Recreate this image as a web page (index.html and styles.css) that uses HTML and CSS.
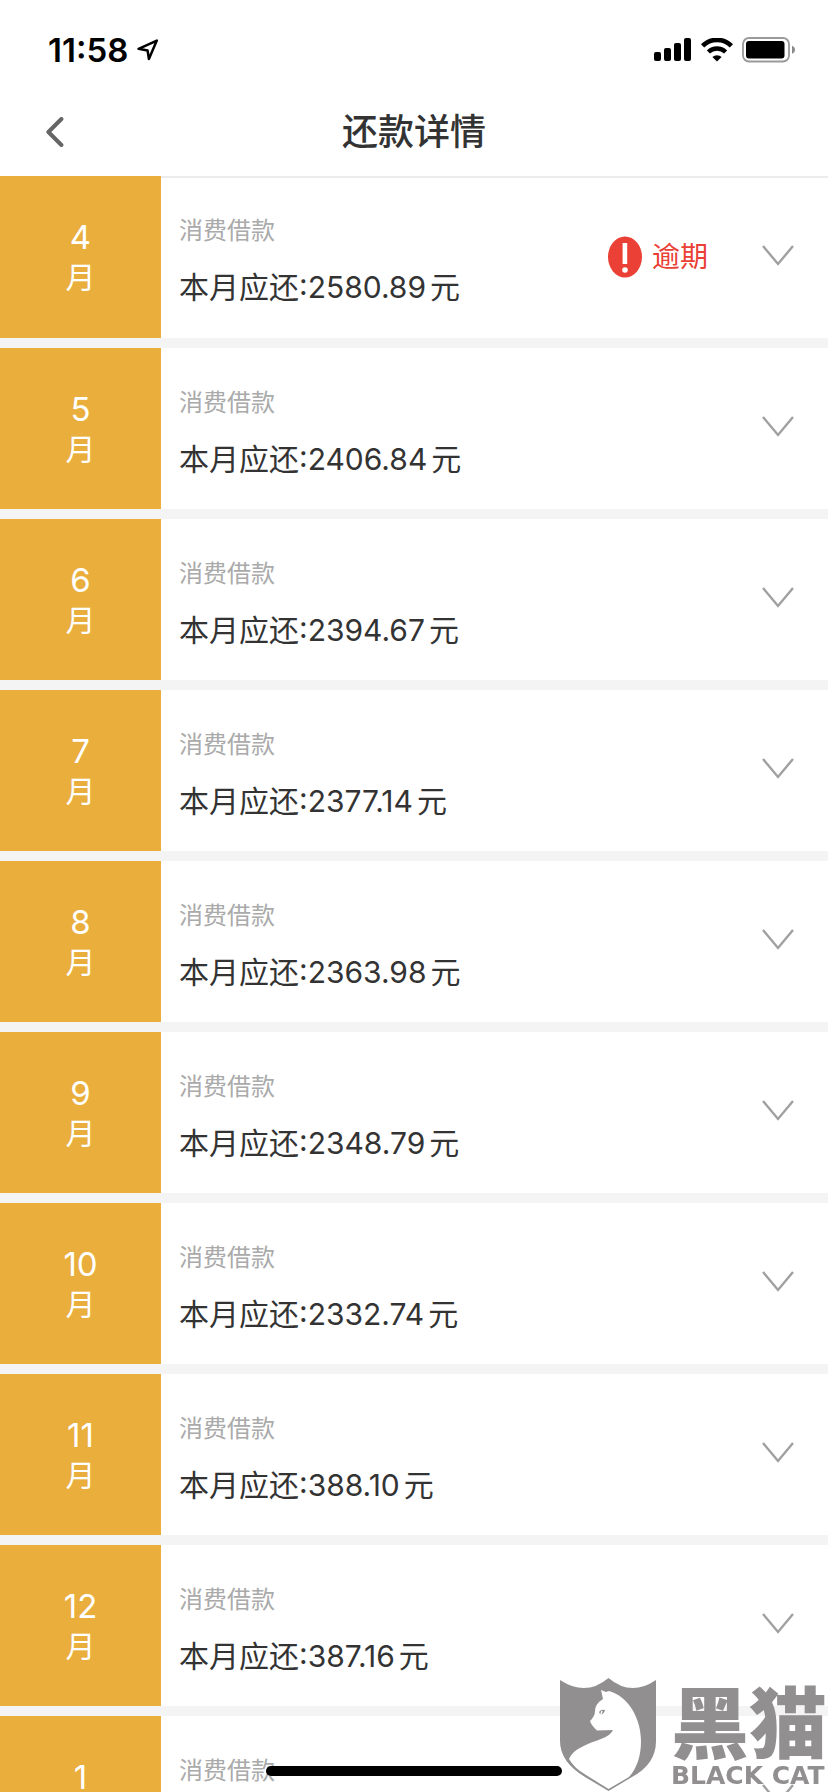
FILE: index.html
```
<!DOCTYPE html>
<html lang="zh-CN">

<head>
    <meta charset="UTF-8">
    <meta name="viewport" content="width=device-width, initial-scale=1.0">
    <title>还款详情</title>
    <link rel="stylesheet" href="styles.css">
</head>

<body>

    <svg class="symbols" aria-hidden="true">
        <symbol id="chevron" viewBox="0 0 32 21">
            <path d="M1 1 L16 19 L31 1" fill="none" stroke="currentColor" stroke-width="2.4" />
        </symbol>
    </svg>

    <header>
        <div class="status-bar">
            <div class="status-left">
                <span class="time">11:58</span>
                <svg width="22" height="22" viewBox="0 0 22 22">
                    <path d="M1.6 9.8 L19.8 1.6 L11.9 20 L10.6 11.6 Z" fill="none" stroke="#000" stroke-width="2.5" stroke-linejoin="round" />
                </svg>
            </div>
            <div class="status-right">
                <svg width="38" height="24" viewBox="0 0 38 24">
                    <rect x="0" y="14" width="7" height="9" rx="2" />
                    <rect x="10" y="10" width="7" height="13" rx="2" />
                    <rect x="20" y="5" width="7" height="18" rx="2" />
                    <rect x="30" y="0" width="7" height="23" rx="2" />
                </svg>
                <svg width="32" height="24" viewBox="0 0 32 24">
                    <path d="M1.6 7.8 A20.5 20.5 0 0 1 30.4 7.8" fill="none" stroke="#000" stroke-width="4.6" />
                    <path d="M7.4 14 A12.4 12.4 0 0 1 24.6 14" fill="none" stroke="#000" stroke-width="4.4" />
                    <path d="M11.4 19 A6.6 6.6 0 0 1 20.6 19 L16 23.4 Z" />
                </svg>
                <svg width="54" height="26" viewBox="0 0 54 26">
                    <rect x="1" y="1" width="46" height="23.5" rx="6" fill="none" stroke="#9a9a9a" stroke-width="1.8" />
                    <rect x="4" y="4" width="38.5" height="17.5" rx="3" />
                    <path d="M50 8.8 Q53 10 53 12.8 Q53 15.6 50 16.8 Z" fill="#8a8a8a" />
                </svg>
            </div>
        </div>
        <nav class="nav-bar">
            <button class="back" aria-label="返回">
                <svg width="18" height="30" viewBox="0 0 18 30">
                    <path d="M15.4 2 L2.4 15 L15.4 28" fill="none" stroke="#666" stroke-width="4" stroke-linecap="round" stroke-linejoin="round" />
                </svg>
            </button>
            <h1>还款详情</h1>
        </nav>
    </header>

    <main class="list">
        <section class="item">
            <div class="month"><span>4</span><span>月</span></div>
            <div class="info">
                <p class="type">消费借款</p>
                <p class="amount">本月应还:2580.89<span class="unit">元</span></p>
            </div>
            <div class="overdue">
                <svg width="34" height="42" viewBox="0 0 34 42">
                    <ellipse cx="17" cy="21" rx="17" ry="20.5" fill="#ea4035" />
                    <rect x="14.6" y="7" width="4.6" height="21" fill="#fff" />
                    <circle cx="17" cy="34" r="2.8" fill="#fff" />
                </svg>
                <span>逾期</span>
            </div>
            <button class="toggle" aria-label="展开4月"><svg><use href="#chevron" /></svg></button>
        </section>
        <section class="item">
            <div class="month"><span>5</span><span>月</span></div>
            <div class="info">
                <p class="type">消费借款</p>
                <p class="amount">本月应还:2406.84<span class="unit">元</span></p>
            </div>
            <button class="toggle" aria-label="展开5月"><svg><use href="#chevron" /></svg></button>
        </section>
        <section class="item">
            <div class="month"><span>6</span><span>月</span></div>
            <div class="info">
                <p class="type">消费借款</p>
                <p class="amount">本月应还:2394.67<span class="unit">元</span></p>
            </div>
            <button class="toggle" aria-label="展开6月"><svg><use href="#chevron" /></svg></button>
        </section>
        <section class="item">
            <div class="month"><span>7</span><span>月</span></div>
            <div class="info">
                <p class="type">消费借款</p>
                <p class="amount">本月应还:2377.14<span class="unit">元</span></p>
            </div>
            <button class="toggle" aria-label="展开7月"><svg><use href="#chevron" /></svg></button>
        </section>
        <section class="item">
            <div class="month"><span>8</span><span>月</span></div>
            <div class="info">
                <p class="type">消费借款</p>
                <p class="amount">本月应还:2363.98<span class="unit">元</span></p>
            </div>
            <button class="toggle" aria-label="展开8月"><svg><use href="#chevron" /></svg></button>
        </section>
        <section class="item">
            <div class="month"><span>9</span><span>月</span></div>
            <div class="info">
                <p class="type">消费借款</p>
                <p class="amount">本月应还:2348.79<span class="unit">元</span></p>
            </div>
            <button class="toggle" aria-label="展开9月"><svg><use href="#chevron" /></svg></button>
        </section>
        <section class="item">
            <div class="month"><span>10</span><span>月</span></div>
            <div class="info">
                <p class="type">消费借款</p>
                <p class="amount">本月应还:2332.74<span class="unit">元</span></p>
            </div>
            <button class="toggle" aria-label="展开10月"><svg><use href="#chevron" /></svg></button>
        </section>
        <section class="item">
            <div class="month"><span>11</span><span>月</span></div>
            <div class="info">
                <p class="type">消费借款</p>
                <p class="amount">本月应还:388.10<span class="unit">元</span></p>
            </div>
            <button class="toggle" aria-label="展开11月"><svg><use href="#chevron" /></svg></button>
        </section>
        <section class="item">
            <div class="month"><span>12</span><span>月</span></div>
            <div class="info">
                <p class="type">消费借款</p>
                <p class="amount">本月应还:387.16<span class="unit">元</span></p>
            </div>
            <button class="toggle" aria-label="展开12月"><svg><use href="#chevron" /></svg></button>
        </section>
        <section class="item">
            <div class="month"><span>1</span><span>月</span></div>
            <div class="info">
                <p class="type">消费借款</p>
            </div>
            <button class="toggle" aria-label="展开1月"><svg><use href="#chevron" /></svg></button>
        </section>
    </main>

    <div class="home-indicator"></div>

    <div class="watermark">
        <svg width="98" height="115" viewBox="0 0 98 115">
            <path d="M1 3 Q27 20 49.500 1 Q72 20 97 3 V64 Q97 87 73 100 L49.500 114 L26 100 Q1 85 1 64 Z" fill="#918f90" />
            <path d="M42 13 L47 15 L50 14 C69 19 82 41 82 64 C82 79 78 91 70 100 L49.500 112 L27 98 Q15 91 10 82 C14 72 28 67 42 62 Q51 59 54 53 L38 53.500 Q32 48 31 44 Q36 39 36 34 Q36 27 44 22 Z" fill="#fff" />
            <path d="M40 35 Q42 32 46 33 Q45 38 41 37 Z" fill="#918f90" />
            <path d="M43 34 L42 37" stroke="#fff" stroke-width="1.500" />
        </svg>
        <div class="brand">
            <span class="brand-cn">黑猫</span>
            <span class="brand-en">BLACK CAT</span>
        </div>
    </div>

</body>

</html>
```
FILE: styles.css
```
/* Reset Styles */
* {
    box-sizing: border-box;
    margin: 0;
    padding: 0;
}

/* Body Styles */
body {
    height: 100vh;
    overflow: hidden;
    background-color: #fff;
    color: #333;
    font-family: Inter, "Noto Sans CJK SC", sans-serif;
}

button {
    border: none;
    background: none;
    cursor: pointer;
}

svg {
    display: block;
}

.symbols {
    display: none;
}

/* Status Bar */
.status-bar {
    display: flex;
    justify-content: space-between;
    align-items: center;
    height: 88px;
    padding: 12px 32px 0 48px;
}

.status-left,
.status-right {
    display: flex;
    align-items: center;
    gap: 9px;
}

.time {
    color: #000;
    font-size: 33px;
    font-weight: 600;
}

/* Nav Bar */
.nav-bar {
    display: grid;
    grid-template-columns: 80px 1fr 80px;
    align-items: center;
    height: 88px;
}

.back {
    padding: 8px 16px 8px 46px;
}

h1 {
    font-size: 36px;
    font-weight: 500;
    line-height: 48px;
    text-align: center;
}

/* Repayment List */
.list {
    display: flex;
    flex-direction: column;
    gap: 10px;
    background-color: #f4f4f4;
}

.item {
    display: flex;
    flex-shrink: 0;
    align-items: center;
    height: 161px;
    padding-right: 34px;
    background-color: #fff;
}

.item:first-child {
    height: 162px;
    box-shadow: inset 0 2px #ececec;
}

.month {
    display: flex;
    flex-direction: column;
    justify-content: center;
    align-items: center;
    align-self: stretch;
    width: 161px;
    background-color: #e9ae3c;
    color: #fff;
    font-size: 33px;
    font-weight: 400;
    line-height: 40px;
}

.month span:last-child {
    font-size: 30px;
}

.info {
    display: flex;
    flex: 1;
    flex-direction: column;
    gap: 16px;
    height: 96px;
    padding-top: 2px;
    padding-left: 18px;
    line-height: 40px;
}

.type {
    color: #aaa;
    font-size: 24px;
}

.amount {
    font-size: 30px;
}

.unit {
    margin-left: 4px;
}

.overdue {
    display: flex;
    align-items: center;
    gap: 10px;
    margin-right: 54px;
    color: #ea4035;
    font-size: 28px;
    line-height: 40px;
}

.toggle {
    padding-bottom: 4px;
    color: #a0a0a0;
}

.toggle svg {
    width: 32px;
    height: 21px;
}

/* Home Indicator */
.home-indicator {
    position: fixed;
    bottom: 16px;
    left: 50%;
    width: 296px;
    height: 10px;
    margin-left: -148px;
    border-radius: 5px;
    background-color: #000;
}

/* Watermark */
.watermark {
    position: fixed;
    right: 0;
    bottom: 0;
    display: flex;
    gap: 14px;
    color: #918f90;
}

.brand {
    display: flex;
    flex-direction: column;
    width: 157px;
    white-space: nowrap;
}

.brand-cn {
    font-family: "Noto Sans CJK SC", sans-serif;
    font-size: 78px;
    font-weight: 900;
    line-height: 84px;
}

.brand-en {
    font-family: "DejaVu Sans", sans-serif;
    font-size: 25px;
    font-weight: 700;
    line-height: 30px;
}
```
